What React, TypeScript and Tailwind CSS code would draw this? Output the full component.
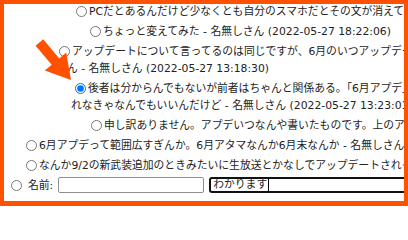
function Radio({ checked = false }: { checked?: boolean }) {
  return (
    <input
      type="radio"
      readOnly
      checked={checked}
      className="m-0 mr-[2px] w-[11px] h-[11px] shrink-0"
    />
  );
}

type Item = {
  pad: string;
  first: string;
  rest?: { pad: string; text: string };
  checked?: boolean;
};

// indented thread of comments, each with a radio to pick the reply target
const items: Item[] = [
  {
    pad: "pl-[76px]",
    first: "PCだとあるんだけど少なくとも自分のスマホだとその文が消えてるんだよね - 名無しさん",
  },
  {
    pad: "pl-[90px]",
    first: "ちょっと変えてみた - 名無しさん (2022-05-27 18:22:06)",
  },
  {
    pad: "pl-[59px]",
    first: "アップデートについて言ってるのは同じですが、6月のいつアップデートなのかを聞いてる",
    rest: { pad: "pl-[67px]", text: "ん - 名無しさん (2022-05-27 13:18:30)" },
  },
  {
    pad: "pl-[75px]",
    first: "後者は分からんでもないが前者はちゃんと関係ある。「6月アプデ」とだけ書かれてもいつでも来てく",
    rest: { pad: "pl-[71px]", text: "れなきゃなんでもいいんだけど - 名無しさん (2022-05-27 13:23:01)" },
    checked: true,
  },
  {
    pad: "pl-[91px]",
    first: "申し訳ありません。アプデいつなんや書いたものです。上のアプデ情報を見て書きました",
  },
  {
    pad: "pl-[26px]",
    first: "6月アプデって範囲広すぎんか。6月アタマなんか6月末なんか - 名無しさん (2022-05-27 12:40:11)",
  },
  {
    pad: "pl-[26px]",
    first: "なんか9/2の新武装追加のときみたいに生放送とかなしでアップデートされそう - 名無しさん",
  },
];

export default function App() {
  return (
    <div className="relative w-[408px] h-[206px] overflow-hidden bg-white text-[#222] text-[10.8px] leading-[17px] font-['DejaVu_Sans','Noto_Sans_CJK_JP',sans-serif]">
      <div className="flex flex-col gap-[3px] pt-[2.5px] whitespace-nowrap">
        {items.map((item, i) => (
          <div key={i}>
            <div className={`flex items-center h-[17px] ${item.pad}`}>
              <Radio checked={item.checked} />
              <span>{item.first}</span>
            </div>
            {item.rest && (
              <div className={`h-[17px] ${item.rest.pad}`}>{item.rest.text}</div>
            )}
          </div>
        ))}

        <div className="flex items-center h-[17px] pl-[11px]">
          <Radio />
          <span className="ml-[4px]">名前:</span>
          <div className="ml-[5px] w-[146px] h-[16px] shrink-0 border border-[#8f8f8f] rounded-[2px] bg-white" />
          <div className="ml-[5px] w-[240px] h-[16px] shrink-0 border-2 border-[#111] rounded-[3px] bg-white flex items-center pl-[2px] leading-[12px]">
            <span>わかります</span>
            <span className="ml-[1px] w-px h-[12px] bg-black" />
          </div>
        </div>
      </div>

      {/* annotation arrow */}
      <svg
        className="absolute inset-0 pointer-events-none"
        width="408"
        height="206"
        viewBox="0 0 408 206"
      >
        <polygon
          fill="#ff5100"
          points="71,80 66.2,52.6 59.3,58.4 43.2,39.3 35.6,45.7 51.7,64.8 44.8,70.6"
        />
      </svg>

      {/* annotation frame */}
      <div className="absolute inset-0 pointer-events-none border-4 border-b-[5px] border-[#ff5100]" />
    </div>
  );
}
